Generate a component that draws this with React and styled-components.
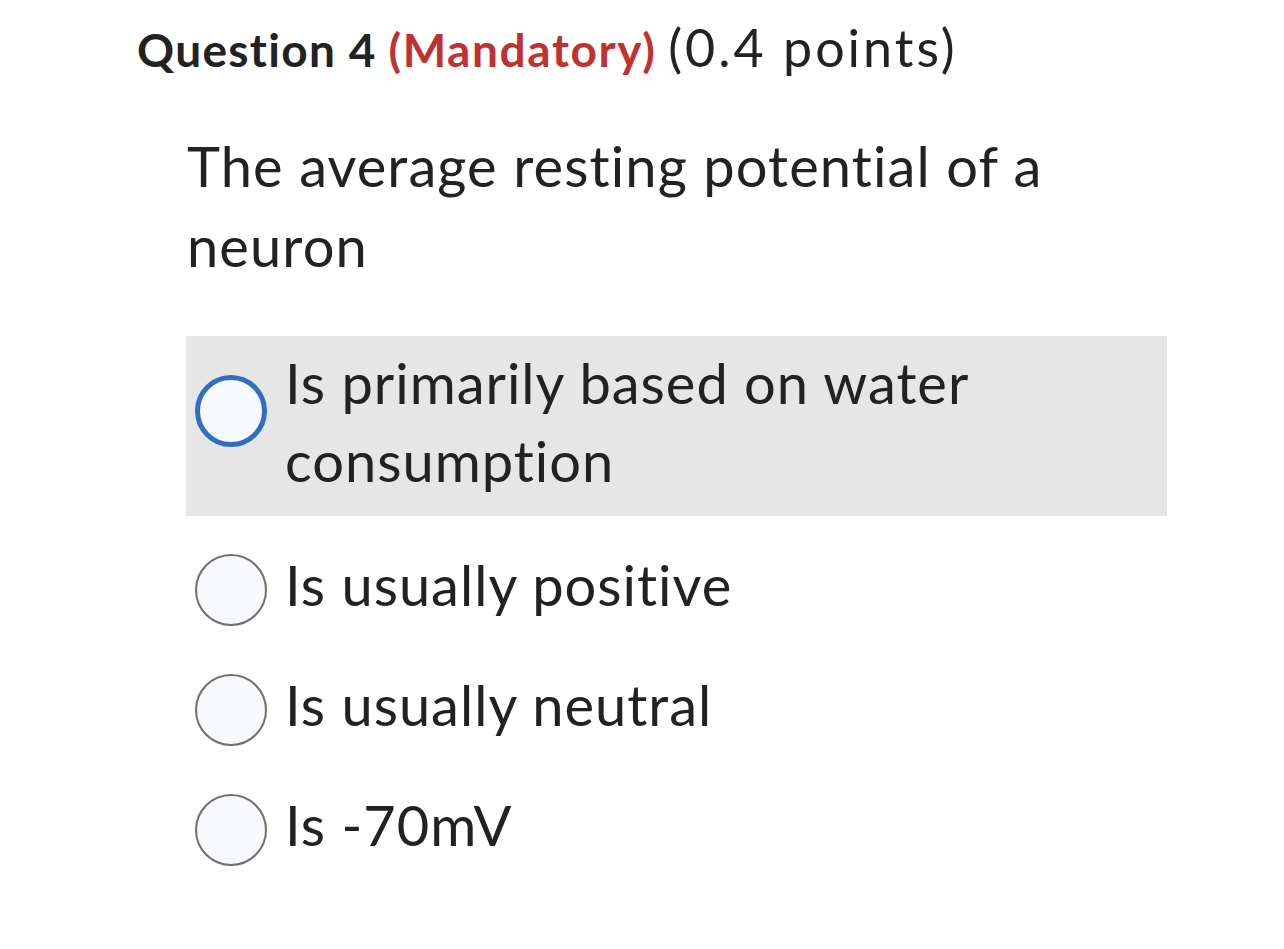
import styled, { createGlobalStyle } from 'styled-components';

const GlobalStyle = createGlobalStyle`
  body {
    margin: 0;
    background: #ffffff;
    font-family: Lato, "Noto Sans", sans-serif;
    color: #222222;
    font-variant-ligatures: none;
  }
`;

const options = [
  { id: 'a', label: 'Is primarily based on water consumption', focused: true },
  { id: 'b', label: 'Is usually positive' },
  { id: 'c', label: 'Is usually neutral' },
  { id: 'd', label: 'Is -70mV' },
];

const App = () => {
  return (
    <Page>
      <GlobalStyle />
      <Title>
        <strong>Question 4</strong> <Mandatory>(Mandatory)</Mandatory> <Points>(0.4 points)</Points>
      </Title>
      <Body>
        <Prompt>The average resting potential of a neuron</Prompt>
        <OptionList>
          {options.map((option) => (
            <Option key={option.id} $focused={option.focused}>
              <Radio $focused={option.focused} />
              <OptionLabel>{option.label}</OptionLabel>
            </Option>
          ))}
        </OptionList>
      </Body>
    </Page>
  );
};

export default App;

const Page = styled.div`
  width: 1284px;
  min-height: 949px;
  padding: 12px 0 0 137px;
  box-sizing: border-box;
`;

const Title = styled.h2`
  margin: 0;
  font-size: 46px;
  line-height: 70px;
  font-weight: 400;
  color: #222222;
  white-space: nowrap;

  > strong {
    font-weight: 700;
    letter-spacing: 1.3px;
  }
`;

const Mandatory = styled.span`
  color: #c03232;
  font-weight: 700;
  letter-spacing: 1.6px;
`;

const Points = styled.span`
  font-size: 52px;
  letter-spacing: 3px;
`;

const Body = styled.div`
  padding-left: 49px;
  width: 981px;
`;

const Prompt = styled.p`
  margin: 41px 0 0;
  padding-left: 1px;
  width: 900px;
  font-size: 56px;
  line-height: 80px;
  letter-spacing: 1.1px;
`;

const OptionList = styled.div`
  display: flex;
  flex-direction: column;
  margin-top: 50px;
`;

const Option = styled.div`
  display: flex;
  align-items: flex-start;
  gap: 18px;
  padding: ${(p) => (p.$focused ? '8px 9px 16px' : '20px 9px')};
  margin-bottom: ${(p) => (p.$focused ? '10px' : '0')};
  background: ${(p) => (p.$focused ? '#e6e6e6' : 'transparent')};
`;

const Radio = styled.span`
  flex: none;
  width: 72px;
  height: 72px;
  margin-top: ${(p) => (p.$focused ? '31px' : '8px')};
  border-radius: 50%;
  box-sizing: border-box;
  background: #f7f9fe;
  border: ${(p) => (p.$focused ? '5px solid #2f6fbf' : '2.5px solid #6f6f6f')};
`;

const OptionLabel = styled.span`
  font-size: 56px;
  line-height: 78px;
  letter-spacing: 1px;
  color: #222222;
  max-width: 800px;
`;
